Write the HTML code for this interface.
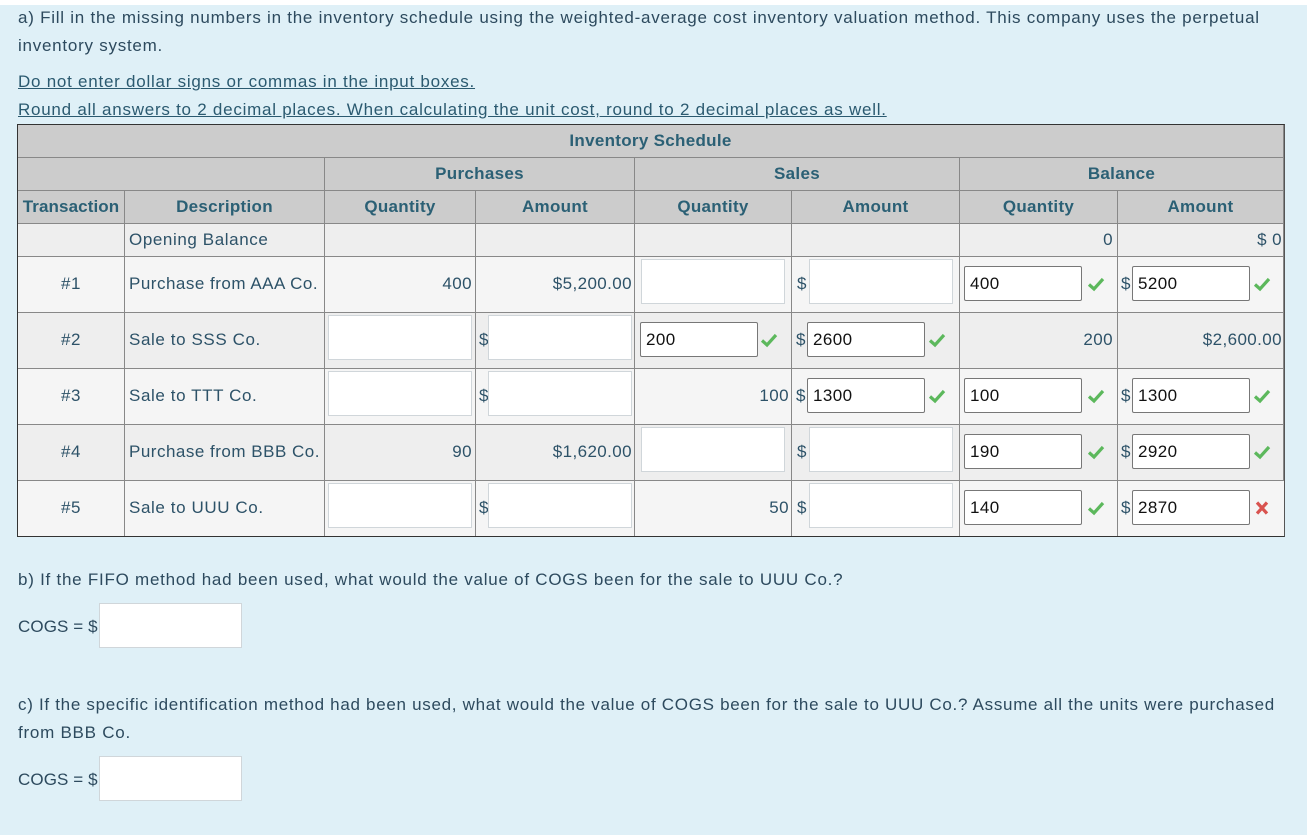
<!DOCTYPE html>
<html><head><meta charset="utf-8"><style>
*{margin:0;padding:0;box-sizing:border-box}
body{width:1307px;height:835px;background:#dff0f7;position:relative;overflow:hidden;font-family:"Liberation Sans",Arial,sans-serif;color:#2d4a5e;font-size:17px}
.top{position:absolute;left:0;top:0;width:1307px;height:5px;background:#fff}
.t{position:absolute;white-space:nowrap;line-height:20px;letter-spacing:0.75px}
.u{text-decoration:underline;color:#2b5a70}
.c{position:absolute;border-right:1px solid #888;border-bottom:1px solid #888}
.h{background:#ccc;color:#2b6075;font-weight:bold;text-align:center;font-size:17px;letter-spacing:0.3px}
.r0{background:#eeeeee}.r1{background:#f5f5f5}
.tx{position:absolute;white-space:nowrap;font-size:17px;line-height:20px;color:#2d5268;letter-spacing:0.6px}
.rt{letter-spacing:0.4px}
.ie{position:absolute;background:#fff;border:1px solid #d0d6da}
.if{position:absolute;background:#fff;border:1px solid #777;border-radius:2px;height:35px;width:118px;font-size:17px;color:#111;padding-left:5px;line-height:33px;letter-spacing:0.4px}
.ck{position:absolute;width:18px;height:16px}
</style></head><body>
<div class="top"></div>
<div class="t" style="left:18px;top:8px">a) Fill in the missing numbers in the inventory schedule using the weighted-average cost inventory valuation method. This company uses the perpetual</div>
<div class="t" style="left:18px;top:36px">inventory system.</div>
<div class="t u" style="left:18px;top:72px">Do not enter dollar signs or commas in the input boxes.</div>
<div class="t u" style="left:18px;top:100px">Round all answers to 2 decimal places. When calculating the unit cost, round to 2 decimal places as well.</div>

<div style="position:absolute;left:17px;top:124px;width:1268px;height:413px;border:1px solid #333;border-right:1px solid #555;background:#eee"></div>
<div class="c h" style="left:18px;top:125px;width:1266px;height:33px;line-height:32px">Inventory Schedule</div>
<div class="c h" style="left:18px;top:158px;width:307px;height:33px"></div>
<div class="c h" style="left:325px;top:158px;width:310px;height:33px;line-height:32px">Purchases</div>
<div class="c h" style="left:635px;top:158px;width:325px;height:33px;line-height:32px">Sales</div>
<div class="c h" style="left:960px;top:158px;width:324px;height:33px;line-height:32px">Balance</div>
<div class="c h" style="left:18px;top:191px;width:107px;height:33px;line-height:32px;letter-spacing:0.1px">Transaction</div>
<div class="c h" style="left:125px;top:191px;width:200px;height:33px;line-height:32px">Description</div>
<div class="c h" style="left:325px;top:191px;width:151px;height:33px;line-height:32px">Quantity</div>
<div class="c h" style="left:476px;top:191px;width:159px;height:33px;line-height:32px">Amount</div>
<div class="c h" style="left:635px;top:191px;width:157px;height:33px;line-height:32px">Quantity</div>
<div class="c h" style="left:792px;top:191px;width:168px;height:33px;line-height:32px">Amount</div>
<div class="c h" style="left:960px;top:191px;width:158px;height:33px;line-height:32px">Quantity</div>
<div class="c h" style="left:1118px;top:191px;width:166px;height:33px;line-height:32px">Amount</div>

<div class="c r0" style="left:18px;top:224px;width:107px;height:33px"></div>
<div class="c r0" style="left:125px;top:224px;width:200px;height:33px"></div>
<div class="c r0" style="left:325px;top:224px;width:151px;height:33px"></div>
<div class="c r0" style="left:476px;top:224px;width:159px;height:33px"></div>
<div class="c r0" style="left:635px;top:224px;width:157px;height:33px"></div>
<div class="c r0" style="left:792px;top:224px;width:168px;height:33px"></div>
<div class="c r0" style="left:960px;top:224px;width:158px;height:33px"></div>
<div class="c r0" style="left:1118px;top:224px;width:166px;height:33px"></div>
<div class="tx" style="left:129px;top:230px">Opening Balance</div>
<div class="tx rt" style="right:194px;top:230px">0</div>
<div class="tx rt" style="right:25px;top:230px">$ 0</div>

<div class="c r1" style="left:18px;top:257px;width:107px;height:56px"></div>
<div class="c r1" style="left:125px;top:257px;width:200px;height:56px"></div>
<div class="c r1" style="left:325px;top:257px;width:151px;height:56px"></div>
<div class="c r1" style="left:476px;top:257px;width:159px;height:56px"></div>
<div class="c r1" style="left:635px;top:257px;width:157px;height:56px"></div>
<div class="c r1" style="left:792px;top:257px;width:168px;height:56px"></div>
<div class="c r1" style="left:960px;top:257px;width:158px;height:56px"></div>
<div class="c r1" style="left:1118px;top:257px;width:166px;height:56px"></div>
<div class="c r0" style="left:18px;top:313px;width:107px;height:56px"></div>
<div class="c r0" style="left:125px;top:313px;width:200px;height:56px"></div>
<div class="c r0" style="left:325px;top:313px;width:151px;height:56px"></div>
<div class="c r0" style="left:476px;top:313px;width:159px;height:56px"></div>
<div class="c r0" style="left:635px;top:313px;width:157px;height:56px"></div>
<div class="c r0" style="left:792px;top:313px;width:168px;height:56px"></div>
<div class="c r0" style="left:960px;top:313px;width:158px;height:56px"></div>
<div class="c r0" style="left:1118px;top:313px;width:166px;height:56px"></div>
<div class="c r1" style="left:18px;top:369px;width:107px;height:56px"></div>
<div class="c r1" style="left:125px;top:369px;width:200px;height:56px"></div>
<div class="c r1" style="left:325px;top:369px;width:151px;height:56px"></div>
<div class="c r1" style="left:476px;top:369px;width:159px;height:56px"></div>
<div class="c r1" style="left:635px;top:369px;width:157px;height:56px"></div>
<div class="c r1" style="left:792px;top:369px;width:168px;height:56px"></div>
<div class="c r1" style="left:960px;top:369px;width:158px;height:56px"></div>
<div class="c r1" style="left:1118px;top:369px;width:166px;height:56px"></div>
<div class="c r0" style="left:18px;top:425px;width:107px;height:56px"></div>
<div class="c r0" style="left:125px;top:425px;width:200px;height:56px"></div>
<div class="c r0" style="left:325px;top:425px;width:151px;height:56px"></div>
<div class="c r0" style="left:476px;top:425px;width:159px;height:56px"></div>
<div class="c r0" style="left:635px;top:425px;width:157px;height:56px"></div>
<div class="c r0" style="left:792px;top:425px;width:168px;height:56px"></div>
<div class="c r0" style="left:960px;top:425px;width:158px;height:56px"></div>
<div class="c r0" style="left:1118px;top:425px;width:166px;height:56px"></div>
<div class="c r1" style="left:18px;top:481px;width:107px;height:55px;border-bottom:none"></div>
<div class="c r1" style="left:125px;top:481px;width:200px;height:55px;border-bottom:none"></div>
<div class="c r1" style="left:325px;top:481px;width:151px;height:55px;border-bottom:none"></div>
<div class="c r1" style="left:476px;top:481px;width:159px;height:55px;border-bottom:none"></div>
<div class="c r1" style="left:635px;top:481px;width:157px;height:55px;border-bottom:none"></div>
<div class="c r1" style="left:792px;top:481px;width:168px;height:55px;border-bottom:none"></div>
<div class="c r1" style="left:960px;top:481px;width:158px;height:55px;border-bottom:none"></div>
<div class="c r1" style="left:1118px;top:481px;width:166px;height:55px;border-right:none;border-bottom:none"></div>

<svg width="0" height="0" style="position:absolute"><defs>
<symbol id="ok" viewBox="0 0 18 16"><path d="M2 8.5 L7 13 L16 3" fill="none" stroke="#5cb85c" stroke-width="3.2"/></symbol>
<symbol id="no" viewBox="0 0 18 16"><path d="M4 2.5 L14 13.5 M14 2.5 L4 13.5" fill="none" stroke="#d9534f" stroke-width="3.2"/></symbol>
</defs></svg>

<div class="tx" style="left:61px;top:274px">#1</div>
<div class="tx" style="left:129px;top:274px;letter-spacing:0.5px">Purchase from AAA Co.</div>
<div class="tx rt" style="right:835px;top:274px">400</div>
<div class="tx rt" style="right:675px;top:274px">$5,200.00</div>
<div class="ie" style="left:641px;top:259px;width:144px;height:45px"></div>
<div class="tx" style="left:797px;top:274px">$</div>
<div class="ie" style="left:809px;top:259px;width:144px;height:45px"></div>
<div class="if" style="left:964px;top:266px">400</div><svg class="ck" style="left:1087px;top:276px"><use href="#ok"/></svg>
<div class="tx" style="left:1121px;top:274px">$</div>
<div class="if" style="left:1132px;top:266px">5200</div><svg class="ck" style="left:1253px;top:276px"><use href="#ok"/></svg>

<div class="tx" style="left:61px;top:330px">#2</div>
<div class="tx" style="left:129px;top:330px">Sale to SSS Co.</div>
<div class="ie" style="left:328px;top:315px;width:144px;height:45px"></div>
<div class="tx" style="left:479px;top:330px">$</div>
<div class="ie" style="left:488px;top:315px;width:144px;height:45px"></div>
<div class="if" style="left:640px;top:322px">200</div><svg class="ck" style="left:760px;top:332px"><use href="#ok"/></svg>
<div class="tx" style="left:796px;top:330px">$</div>
<div class="if" style="left:807px;top:322px">2600</div><svg class="ck" style="left:928px;top:332px"><use href="#ok"/></svg>
<div class="tx rt" style="right:194px;top:330px">200</div>
<div class="tx rt" style="right:25px;top:330px">$2,600.00</div>

<div class="tx" style="left:61px;top:386px">#3</div>
<div class="tx" style="left:129px;top:386px">Sale to TTT Co.</div>
<div class="ie" style="left:328px;top:371px;width:144px;height:45px"></div>
<div class="tx" style="left:479px;top:386px">$</div>
<div class="ie" style="left:488px;top:371px;width:144px;height:45px"></div>
<div class="tx rt" style="right:518px;top:386px">100</div>
<div class="tx" style="left:796px;top:386px">$</div>
<div class="if" style="left:807px;top:378px">1300</div><svg class="ck" style="left:928px;top:388px"><use href="#ok"/></svg>
<div class="if" style="left:964px;top:378px">100</div><svg class="ck" style="left:1087px;top:388px"><use href="#ok"/></svg>
<div class="tx" style="left:1121px;top:386px">$</div>
<div class="if" style="left:1132px;top:378px">1300</div><svg class="ck" style="left:1253px;top:388px"><use href="#ok"/></svg>

<div class="tx" style="left:61px;top:442px">#4</div>
<div class="tx" style="left:129px;top:442px;letter-spacing:0.5px">Purchase from BBB Co.</div>
<div class="tx rt" style="right:835px;top:442px">90</div>
<div class="tx rt" style="right:675px;top:442px">$1,620.00</div>
<div class="ie" style="left:641px;top:427px;width:144px;height:45px"></div>
<div class="tx" style="left:797px;top:442px">$</div>
<div class="ie" style="left:809px;top:427px;width:144px;height:45px"></div>
<div class="if" style="left:964px;top:434px">190</div><svg class="ck" style="left:1087px;top:444px"><use href="#ok"/></svg>
<div class="tx" style="left:1121px;top:442px">$</div>
<div class="if" style="left:1132px;top:434px">2920</div><svg class="ck" style="left:1253px;top:444px"><use href="#ok"/></svg>

<div class="tx" style="left:61px;top:498px">#5</div>
<div class="tx" style="left:129px;top:498px">Sale to UUU Co.</div>
<div class="ie" style="left:328px;top:483px;width:144px;height:45px"></div>
<div class="tx" style="left:479px;top:498px">$</div>
<div class="ie" style="left:488px;top:483px;width:144px;height:45px"></div>
<div class="tx rt" style="right:518px;top:498px">50</div>
<div class="tx" style="left:797px;top:498px">$</div>
<div class="ie" style="left:809px;top:483px;width:144px;height:45px"></div>
<div class="if" style="left:964px;top:490px">140</div><svg class="ck" style="left:1087px;top:500px"><use href="#ok"/></svg>
<div class="tx" style="left:1121px;top:498px">$</div>
<div class="if" style="left:1132px;top:490px">2870</div><svg class="ck" style="left:1253px;top:500px"><use href="#no"/></svg>

<div class="t" style="left:18px;top:570px">b) If the FIFO method had been used, what would the value of COGS been for the sale to UUU Co.?</div>
<div class="t" style="left:18px;top:617px;letter-spacing:0.1px">COGS = $</div>
<div class="ie" style="left:99px;top:603px;width:143px;height:45px"></div>
<div class="t" style="left:18px;top:695px;letter-spacing:0.7px">c) If the specific identification method had been used, what would the value of COGS been for the sale to UUU Co.? Assume all the units were purchased</div>
<div class="t" style="left:18px;top:723px">from BBB Co.</div>
<div class="t" style="left:18px;top:770px;letter-spacing:0.1px">COGS = $</div>
<div class="ie" style="left:99px;top:756px;width:143px;height:45px"></div>
</body></html>
